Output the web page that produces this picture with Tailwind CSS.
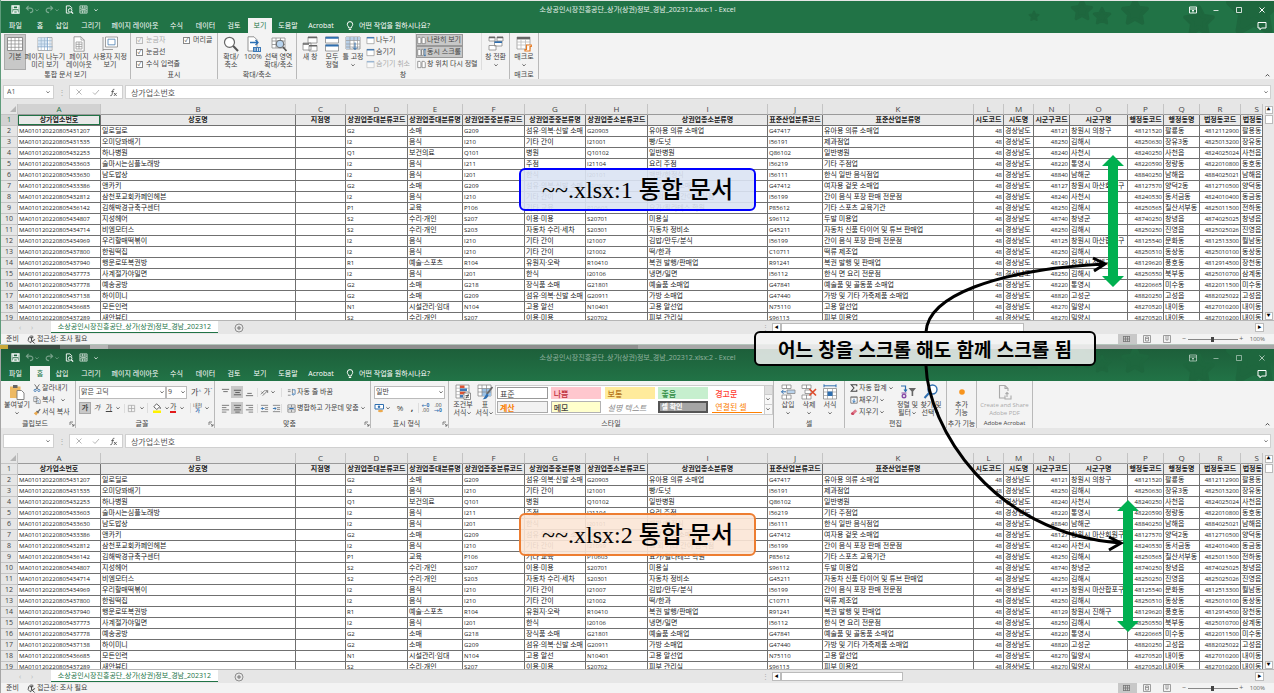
<!DOCTYPE html>
<html lang="ko">
<head>
    <meta charset="UTF-8">
    <meta name="viewport" content="width=device-width, initial-scale=1.0">
    <title>소상공인시장진흥공단_상가(상권)정보_경남_202312.xlsx - Excel</title>
    <script src="https://cdn.jsdelivr.net/npm/@tailwindcss/browser@4"></script>
</head>
<body class="relative overflow-x-hidden bg-[#e6e6e6] font-['Open_Sans','Noto_Sans_CJK_KR',sans-serif] text-[7px] leading-[8px] text-[#444] whitespace-nowrap">

    <!-- icon sprite -->
    <svg class="hidden" xmlns="http://www.w3.org/2000/svg">
        <symbol id="caret" viewBox="0 0 6 6"><path d="M1.4 2.300 3 3.900l1.600-1.600" fill="none" stroke="currentColor" stroke-width=".8"/></symbol>
        <symbol id="save" viewBox="0 0 10 10"><path d="M1 1h8v8H1zM2.5 1v3.2h5V1M3 9V6.5h4V9" fill="none" stroke="currentColor" stroke-width="1.2"/></symbol>
        <symbol id="undo" viewBox="0 0 10 10"><path d="M4 1 1.5 3.5 4 6M1.5 3.5h4.3C10 3.5 9.500 8.500 5.500 8.500" fill="none" stroke="currentColor" stroke-width="1.2"/></symbol>
        <symbol id="redo" viewBox="0 0 10 10"><path d="M6 1l2.500 2.500L6 6M8.500 3.500H4.200C0 3.500.5 8.500 4.500 8.500" fill="none" stroke="currentColor" stroke-width="1.2"/></symbol>
        <symbol id="preview" viewBox="0 0 10 10"><path d="M7.500 4V3L5.500 1H1.500v8H5" fill="none" stroke="currentColor"/><circle cx="5.700" cy="6" r="2" fill="none" stroke="currentColor"/><path d="M7 7.500 9 9.500" stroke="currentColor" stroke-width="1.300"/></symbol>
        <symbol id="cells" viewBox="0 0 10 10"><path d="M1 1h8v8H1zM1 3.500h8M1 6.500h8M4 1v2.500M6.500 1v2.500M4 6.500V9M6.500 6.500V9M2.500 5h5" fill="none" stroke="currentColor" stroke-width=".7"/></symbol>
        <symbol id="ribbonopt" viewBox="0 0 10 10"><path d="M1.500 2h7v6h-7zM1.500 4h7M5 7.500V5M4 6l1-1 1 1" fill="none" stroke="currentColor" stroke-width=".9"/></symbol>
        <symbol id="min" viewBox="0 0 10 10"><path d="M2.500 5.500h5" stroke="currentColor" stroke-width=".8"/></symbol>
        <symbol id="max" viewBox="0 0 10 10"><path d="M2.500 2.500h5v5h-5z" fill="none" stroke="currentColor" stroke-width=".8"/></symbol>
        <symbol id="close" viewBox="0 0 10 10"><path d="m2.500 2.500 5 5m0-5-5 5" stroke="currentColor"/></symbol>
        <symbol id="comment" viewBox="0 0 10 10"><path d="M1 1.500h8v5.500H4.500L3 8.800V7H1z" fill="none" stroke="currentColor"/></symbol>
        <symbol id="bulb" viewBox="0 0 10 10"><path d="M3.800 7C3.800 5.500 2.300 5 2.300 3.300a2.700 2.700 0 0 1 5.400 0C7.700 5 6.200 5.500 6.200 7zM3.800 8.500h2.400" fill="none" stroke="currentColor"/></symbol>
        <symbol id="fx" viewBox="0 0 10 10"><path d="M6 1.500C4 .8 4.200 3 3.800 5S3.500 9 1.500 8.500M2.500 4h3M5.500 5.500l3 3.300M8.500 5.500l-3 3.300" fill="none" stroke="currentColor"/></symbol>
        <symbol id="check" viewBox="0 0 10 10"><path d="m2 5.500 2 2L8 3" fill="none" stroke="currentColor"/></symbol>

        <symbol id="v-normal" viewBox="0 0 16 16"><path d="M.5 1.500h15v13H.5z" fill="#fff" stroke="#777" stroke-width=".8"/><path d="M.5 4.700h15M.5 8h15M.5 11.300h15M4.200 1.500v13M8 1.500v13M11.800 1.500v13" stroke="#8a8a8a" stroke-width=".7"/></symbol>
        <symbol id="v-break" viewBox="0 0 16 16"><path d="M1 1.500h14v13H1z" fill="#fff" stroke="#999" stroke-width=".8"/><path d="M1 1.500h9.500v9H1z" fill="#d5e5f4"/><path d="M1 4.700h14M1 8h14M4.200 1.500v13M7.500 1.500v13M13 1.500v13" stroke="#9db7d0" stroke-width=".7"/><path d="M10.500 1v14M.5 10.800h15" stroke="#7fa5cb" stroke-width=".8"/></symbol>
        <symbol id="v-layout" viewBox="0 0 16 16"><path d="M3 .8h7l3.200 3.200v11.200H3z" fill="#fff" stroke="#888" stroke-width=".8"/><path d="M10 .8V4h3.200M5 6h6v7H5zM5 8.300h6M5 10.600h6M8 6v7" fill="none" stroke="#999" stroke-width=".8"/></symbol>
        <symbol id="v-custom" viewBox="0 0 16 16"><path d="M3.500 1h12v10h-12z" fill="#fff" stroke="#888" stroke-width=".8"/><path d="M6 3.200h7v5.600H6z" fill="#fff" stroke="#4a7db0" stroke-width=".8"/><path d="M1 1v14M1 13.500h10" stroke="#888" stroke-width=".8"/></symbol>
        <symbol id="s-normal" viewBox="0 0 8 8"><path d="M.5 1v6M2.500 1v6M4.500 1v6M6.500 1v6M0 1.500h7M0 4h7M0 6.500h7" stroke="#777" stroke-width=".8"/></symbol>
        <symbol id="s-layout" viewBox="0 0 8 8"><path d="M.5.5h7v7h-7zM2.500 2h3v4h-3zM2.500 3.500h3" fill="none" stroke="#888" stroke-width=".8"/></symbol>
        <symbol id="s-break" viewBox="0 0 8 8"><path d="M.5.5h7v7h-7zM3 .5v4.500h2V.5" fill="none" stroke="#888" stroke-width=".8"/></symbol>
        <symbol id="zoom" viewBox="0 0 16 16"><circle cx="6.500" cy="6.300" r="5" fill="#fff" stroke="#666" stroke-width="1.200"/><path d="m10.200 10 4.800 5" stroke="#555" stroke-width="2"/></symbol>
        <symbol id="zoom100" viewBox="0 0 16 16"><path d="M3 .8h6l3 3V15H3z" fill="#fff" stroke="#888" stroke-width=".9"/><path d="M5 6.500h8M10.500 4l2.500 2.500L10.500 9" fill="none" stroke="#2a6fb5" stroke-width="1.300"/><path d="M8 11h8v5H8z" fill="#3d7ab8"/><path d="M10 12v3M12.500 12v3M14.500 12v3" stroke="#fff" stroke-width=".8"/></symbol>
        <symbol id="zoomsel" viewBox="0 0 16 16"><path d="M1 2h13v10H1zM1 5h13M1 8.500h13M5 2v10M9.500 2v10" fill="#fff" stroke="#8a8a8a" stroke-width=".8"/><circle cx="9" cy="8" r="3.800" fill="#b7d3ee" stroke="#666"/><path d="m12 11 3.500 4" stroke="#555" stroke-width="1.600"/></symbol>
        <symbol id="w-new" viewBox="0 0 16 16"><path d="M6 1h9v6H6zM1 7h8v7H1zM7 9.500h8V15H7z" fill="#fff" stroke="#888" stroke-width=".8"/><path d="M6 1.500h9M1 8h6M7 9.800h8" stroke="#666" stroke-width="1.500"/></symbol>
        <symbol id="w-all" viewBox="0 0 16 16"><path d="M1.500 1h13v6h-13zM1.500 9h13v6h-13z" fill="#fff" stroke="#888" stroke-width=".8"/><path d="M1.500 1.700h13M1.500 9.500h13" stroke="#2f6fb0" stroke-width="2"/></symbol>
        <symbol id="w-freeze" viewBox="0 0 16 16"><path d="M1 1h14v12H1z" fill="#fff" stroke="#888" stroke-width=".8"/><path d="M1 1h14v3.500H1zM1 4.500h4V13H1z" fill="#b9d0e8"/><path d="M1 4.500h14M1 8h14M1 11h14M5 1v12M9 1v12M12.500 1v12" stroke="#999" stroke-width=".7"/><path d="M10 6.500v7M8 11.500l2 2 2-2" stroke="#2f6fb0" fill="none"/></symbol>
        <symbol id="w-small" viewBox="0 0 10 10"><path d="M1 1.500h8v7H1z" fill="#fff" stroke="#999" stroke-width=".8"/><path d="M1 2h8" stroke="#2f6fb0" stroke-width="1.400"/></symbol>
        <symbol id="w-side" viewBox="0 0 10 10"><path d="M.8 1.500h2.500L4.400 3v5.500H.8zM5.600 1.500h2.500L9.200 3v5.500H5.600z" fill="#fff" stroke="#777" stroke-width=".8"/></symbol>
        <symbol id="w-sync" viewBox="0 0 10 10"><path d="M.8 1.500h2.500L4.400 3v5.500H.8zM5 1.500h2V8.500H5z" fill="#fff" stroke="#777" stroke-width=".8"/><path d="M8.800 1v8M8 2.500 8.800 1l.8 1.500M8 7.500 8.800 9l.8-1.500" stroke="#2f6fb0" fill="none" stroke-width=".8"/></symbol>
        <symbol id="w-switch" viewBox="0 0 16 16"><path d="M1 1h6v4H1zM9 1h6v4H9zM1 9.500h7V14H1zM6.500 5.500H14V10H6.500z" fill="#fff" stroke="#888" stroke-width=".8"/><path d="M1 1.500h6M9 1.500h6" stroke="#666" stroke-width="1.400"/><path d="M6.500 6.200H14" stroke="#2f6fb0" stroke-width="1.600"/></symbol>
        <symbol id="macro" viewBox="0 0 16 16"><path d="M1 1h13v12H1z" fill="#fff" stroke="#999" stroke-width=".8"/><path d="M1 2.200h13" stroke="#666" stroke-width="2.400"/><path d="M1 6h13M1 9h13M5 3v10M9.500 3v10" stroke="#bbb" stroke-width=".8"/><path d="M10.500 9h4.800v1.500H14V15H9v-1.500h1.500z" fill="#fff" stroke="#e67b22" stroke-width="1.200"/></symbol>

        <symbol id="paste" viewBox="0 0 16 16"><path d="M1 2.500h10.500V14H1z" fill="#edb963"/><path d="M4 1h4.500v3H4z" fill="#666"/><path d="M8 6.500h4.500L15 9v6.500H8z" fill="#fff" stroke="#777" stroke-width=".9"/></symbol>
        <symbol id="cut" viewBox="0 0 10 10"><path d="m2 .5 4.500 6.300M8 .5 3.500 6.800" stroke="#555"/><circle cx="2.700" cy="8" r="1.400" fill="none" stroke="#2f6fb0"/><circle cx="7.300" cy="8" r="1.400" fill="none" stroke="#2f6fb0"/></symbol>
        <symbol id="copy" viewBox="0 0 10 10"><path d="M1 1h4v6H1zM4 3h3l2 2v4.500H4z" fill="#fff" stroke="#666" stroke-width=".8"/><path d="M5.500 6h2M5.500 7.800h2M2 3h1.500" stroke="#2f6fb0" stroke-width=".7"/></symbol>
        <symbol id="brush" viewBox="0 0 10 10"><path d="M1 6.500 4.500 4l2 2L4 9.500z" fill="#eba94d"/><path d="m4.500 3.500 2.500 3M6.500 4.500 9 1.500" stroke="#666" stroke-width="1.600"/></symbol>
        <symbol id="launch" viewBox="0 0 6 6"><path d="M1 4V1h3M2.500 2.500l2.500 2.500M5 3v2H3" fill="none" stroke="#666" stroke-width=".8"/></symbol>
        <symbol id="border" viewBox="0 0 10 10"><path d="M1.500 1.500h7v7h-7zM5 1.500v7M1.500 5h7" fill="none" stroke="#a5a5a5" stroke-width=".8"/></symbol>
        <symbol id="fill" viewBox="0 0 10 10"><path d="M4.500.8 1.800 3.800l3 2.700 3-2.900zM8.200 4v2" fill="#fff" stroke="#555" stroke-width=".9"/><path d="M1 7.500h8V10H1z" fill="#fff200"/></symbol>
        <symbol id="al-top" viewBox="0 0 10 10"><path d="M1 1.500h8M2.500 4h5" stroke="#666"/></symbol>
        <symbol id="al-mid" viewBox="0 0 10 10"><path d="M1 2.500h8M2.500 5h5M1 7.500h8" stroke="#555"/></symbol>
        <symbol id="al-bot" viewBox="0 0 10 10"><path d="M2.500 6h5M1 8.500h8" stroke="#666"/></symbol>
        <symbol id="al-left" viewBox="0 0 10 10"><path d="M1 1.500h8M1 4h5M1 6.500h8M1 9h5" stroke="#666" stroke-width=".9"/></symbol>
        <symbol id="al-center" viewBox="0 0 10 10"><path d="M1 1.500h8M2.500 4h5M1 6.500h8M2.500 9h5" stroke="#555" stroke-width=".9"/></symbol>
        <symbol id="al-right" viewBox="0 0 10 10"><path d="M1 1.500h8M4 4h5M1 6.500h8M4 9h5" stroke="#666" stroke-width=".9"/></symbol>
        <symbol id="orient" viewBox="0 0 10 10"><path d="M1 7 5.500 2.500M3 8.500 8.500 3M8.500 5.500V3H6M1.500 4l2 2" fill="none" stroke="#666" stroke-width=".9"/></symbol>
        <symbol id="outdent" viewBox="0 0 10 10"><path d="M1 1.500h8M5.500 4H9M5.500 6H9M1 8.500h8" stroke="#777" stroke-width=".9"/><path d="M5 5H1.500M3 3.500 1.500 5 3 6.500" fill="none" stroke="#2f6fb0"/></symbol>
        <symbol id="indent" viewBox="0 0 10 10"><path d="M1 1.500h8M5.500 4H9M5.500 6H9M1 8.500h8" stroke="#777" stroke-width=".9"/><path d="M1 5h3.500M3 3.500 4.500 5 3 6.500" fill="none" stroke="#2f6fb0"/></symbol>
        <symbol id="wrap" viewBox="0 0 10 10"><path d="M1 2h3M1 4h3M1 8h3M6 1v5" stroke="#777" stroke-width=".9"/><path d="M6 2h3v5H6M7.200 5.500 5.800 7l1.400 1.500" fill="none" stroke="#2f6fb0" stroke-width=".8"/></symbol>
        <symbol id="merge" viewBox="0 0 10 10"><path d="M1 1h8v8H1zM1 3.500h8M1 6.500h8M5 1v2.500M5 6.500V9" fill="#fff" stroke="#777" stroke-width=".8"/><path d="M2.500 5h5" stroke="#2f6fb0" stroke-width="1.300"/></symbol>
        <symbol id="money" viewBox="0 0 10 10"><path d="M1 1.500h8.500v4.500H1z" fill="#fff" stroke="#2f6fb0"/><circle cx="5" cy="3.700" r="1.200" fill="#2f6fb0"/><ellipse cx="6.500" cy="8" rx="2.500" ry="1.200" fill="#eba94d"/></symbol>
        <symbol id="cond" viewBox="0 0 16 16"><path d="M1 1h13v13H1z" fill="#fff" stroke="#888" stroke-width=".8"/><path d="M5 1v13M1 4.200h13M1 7.500h13M1 10.700h13" stroke="#aaa" stroke-width=".7"/><path d="M5 1.500h4.500v2.500H5zM5 7.800h5.500v2.500H5z" fill="#dd5233"/><path d="M5 4.500h7v2.500H5zM5 11h3v2.500H5z" fill="#3f79b7"/><path d="M9 9h6.500v6.500H9z" fill="#fff" stroke="#777" stroke-width=".8"/><path d="M10.500 11.500h3.500M10.500 13.200h3.500M13.500 10l-2.500 4.500" stroke="#444" stroke-width=".8"/></symbol>
        <symbol id="tblfmt" viewBox="0 0 16 16"><path d="M1 1h13v11H1z" fill="#fff" stroke="#888" stroke-width=".8"/><path d="M5 4.500h9V12H5z" fill="#9cc2e6"/><path d="M1 4.500h13M1 8h13M5 1v11M9.500 1v11" stroke="#888" stroke-width=".7"/><path d="M15.500 3 10 10" stroke="#666" stroke-width="1.800"/><path d="m10 9.500 1.500 1.500c-.5 3-3 4.500-6 4.200 2-1 2.500-4 4.500-5.700z" fill="#2f6fb0"/></symbol>
        <symbol id="c-ins" viewBox="0 0 16 16"><path d="M2 1h9v3.500H2zM6.500 1v3.500M2 11h9v4H2zM6.500 11v4" fill="#fff" stroke="#888" stroke-width=".8"/><path d="M7 6h8v3.500H7z" fill="#b9d3ec" stroke="#888" stroke-width=".8"/><path d="M6 7.800H1.500M3.500 5.800l-2 2 2 2" fill="none" stroke="#2f6fb0"/></symbol>
        <symbol id="c-del" viewBox="0 0 16 16"><path d="M1 1h9v3.500H1zM5.500 1v3.500M1 11h9v4H1zM5.500 11v4M4 6h6v3.500H4z" fill="#fff" stroke="#888" stroke-width=".8"/><path d="m8.500 5 6.500 6.500m0-6.500-6.500 6.500" stroke="#dd4b2b" stroke-width="1.600"/></symbol>
        <symbol id="c-fmt" viewBox="0 0 16 16"><path d="M1.500 4.500h13V15h-13z" fill="#fff" stroke="#888" stroke-width=".8"/><path d="M1.500 8h13M1.500 11.500h13M5.500 4.500V15M10.500 4.500V15" stroke="#999" stroke-width=".7"/><path d="M5.500 7.500h5v4.500h-5z" fill="#2f6fb0"/><path d="M2 1.800h12M2 .3v3M14 .3v3" stroke="#2f6fb0"/></symbol>
        <symbol id="sum" viewBox="0 0 10 10"><path d="M8.500 2.800V1h-7L5 5 1.500 9h7V7.200" fill="none" stroke="#444" stroke-width="1.300"/></symbol>
        <symbol id="filldown" viewBox="0 0 10 10"><path d="M1 1h8v8H1z" fill="#fff" stroke="#666"/><path d="M1 2h8" stroke="#777"/><path d="M5 3.500V8M3 6l2 2 2-2" fill="none" stroke="#2f6fb0" stroke-width="1.200"/></symbol>
        <symbol id="erase" viewBox="0 0 10 10"><path d="m1 7 5.500-5.500L9 4 4 8.800H2.500z" fill="#e07a8c"/><path d="m1 7 2-2 2.500 2.500L4 8.800H2.500z" fill="#c84860"/></symbol>
        <symbol id="sort" viewBox="0 0 16 16"><path d="M1 2h4.500v5M4 5.500l1.500 2L7 5.500" fill="none" stroke="#2f6fb0" stroke-width="1.200"/><path d="M8.500 4H16l-2.800 3.500V12h-1.600V7.500z" fill="#666"/><circle cx="4" cy="12" r="1.800" fill="none" stroke="#8a4da8" stroke-width="1.400"/><path d="M1.500 9h5" stroke="#8a4da8"/></symbol>
        <symbol id="find" viewBox="0 0 16 16"><circle cx="9.500" cy="5.500" r="4.500" fill="#fff" stroke="#2f6fb0" stroke-width="1.400"/><path d="M6 9 1.500 14" stroke="#2f6fb0" stroke-width="2"/></symbol>
        <symbol id="addin" viewBox="0 0 16 16"><circle cx="8" cy="8" r="2.800" fill="#f7941d"/></symbol>
        <symbol id="pdf" viewBox="0 0 16 16"><path d="M8 14H2.500V1.500H8l3 3V7M8 1.500v3h3M10 13V8.500M8.500 10 10 8.500l1.500 1.500M8 11.500v3.500h6v-3.500" fill="none" stroke="#aaa" stroke-width="1.100"/></symbol>
        <symbol id="access" viewBox="0 0 10 10"><path d="M7 1.500A3.800 3.800 0 1 0 3.500 8.500" fill="none" stroke="#444"/><path d="M3 3h4M5 3v3l3.500 3.500M5 6 4 9M6 6.500l3-1.500" fill="none" stroke="#333"/></symbol>
        <symbol id="plus-c" viewBox="0 0 10 10"><circle cx="5" cy="5" r="4" fill="none" stroke="#777" stroke-width=".8"/><path d="M5 3v4M3 5h4" stroke="#777"/></symbol>
        <symbol id="star" viewBox="-10 -10 20 20"><path d="m0-8 2.500 5 5.500.8-4 3.900.9 5.500L0 4.600l-4.900 2.600.9-5.500-4-3.900 5.500-.8z" stroke-width="2.500" stroke-linejoin="round"/></symbol>
    </svg>

    <!-- window 1 : view tab -->
    <main class="border-l border-[#5f9c7b] pt-px" aria-label="창 1">
        <header data-titlebar="1"></header>
        <div class="flex h-[46px] bg-[#f3f3f3]">
            <section class="flex w-[130px] shrink-0 flex-col border-r border-[#b9b9b9]">
                <div class="flex flex-1 pt-px pl-[3px]">
                    <button class="flex w-[22px] flex-col items-center gap-px border border-[#aaa] bg-[#c8c8c8] pt-px"><svg class="size-4"><use href="#v-normal"/></svg>기본</button>
                    <button class="flex w-[38px] flex-col items-center gap-px pt-[2px]"><svg class="size-4"><use href="#v-break"/></svg><span>페이지 나누기<br>미리 보기</span></button>
                    <button class="flex w-[30px] flex-col items-center gap-px pt-[2px]"><svg class="size-4"><use href="#v-layout"/></svg><span>페이지<br>레이아웃</span></button>
                    <button class="flex w-[32px] flex-col items-center gap-px pt-[2px]"><svg class="size-4"><use href="#v-custom"/></svg><span>사용자 지정<br>보기</span></button>
                </div>
                <h2 class="text-center leading-[9px]">통합 문서 보기</h2>
            </section>
            <section class="flex w-[87px] shrink-0 flex-col border-r border-[#b9b9b9]">
                <div class="grid flex-1 auto-rows-[12px] grid-cols-[47px_auto] content-start pt-px pl-[5px]">
                    <label class="flex items-center gap-[3px] text-[#aaa]"><input type="checkbox" checked disabled class="flex size-[7px] appearance-none items-center justify-center border border-[#bbb] after:text-[6px] after:leading-[6px] after:text-[#999] after:content-['✓']">눈금자</label>
                    <label class="flex items-center gap-[3px]"><input type="checkbox" checked class="flex size-[7px] appearance-none items-center justify-center border border-[#888] bg-white after:text-[6px] after:leading-[6px] after:content-['✓']">머리글</label>
                    <label class="col-span-2 flex items-center gap-[3px]"><input type="checkbox" checked class="flex size-[7px] appearance-none items-center justify-center border border-[#888] bg-white after:text-[6px] after:leading-[6px] after:content-['✓']">눈금선</label>
                    <label class="col-span-2 flex items-center gap-[3px]"><input type="checkbox" checked class="flex size-[7px] appearance-none items-center justify-center border border-[#888] bg-white after:text-[6px] after:leading-[6px] after:content-['✓']">수식 입력줄</label>
                </div>
                <h2 class="text-center leading-[9px]">표시</h2>
            </section>
            <section class="flex w-[79px] shrink-0 flex-col border-r border-[#b9b9b9]">
                <div class="flex flex-1 pt-[3px] pl-px">
                    <button class="flex w-[24px] flex-col items-center gap-px"><svg class="size-4"><use href="#zoom"/></svg><span>확대/<br>축소</span></button>
                    <button class="flex w-[20px] flex-col items-center gap-px"><svg class="size-4"><use href="#zoom100"/></svg>100%</button>
                    <button class="flex w-[31px] flex-col items-center gap-px"><svg class="size-4"><use href="#zoomsel"/></svg><span>선택 영역<br>확대/축소</span></button>
                </div>
                <h2 class="text-center leading-[9px]">확대/축소</h2>
            </section>
            <section class="flex w-[213px] shrink-0 flex-col border-r border-[#b9b9b9]">
                <div class="flex flex-1">
                    <button class="flex w-[26px] flex-col items-center gap-px pt-[3px]"><svg class="size-4"><use href="#w-new"/></svg>새 창</button>
                    <button class="flex w-[18px] flex-col items-center gap-px pt-[3px]"><svg class="size-4"><use href="#w-all"/></svg><span>모두<br>정렬</span></button>
                    <button class="flex w-[24px] flex-col items-center gap-px pt-[3px]"><svg class="size-4"><use href="#w-freeze"/></svg>틀 고정<svg class="size-[6px]"><use href="#caret"/></svg></button>
                    <div class="flex w-[50px] flex-col pt-px pl-px">
                        <button class="flex h-3 items-center gap-px"><svg class="size-[9px]"><use href="#w-small"/></svg>나누기</button>
                        <button class="flex h-3 items-center gap-px"><svg class="size-[9px]"><use href="#w-small"/></svg>숨기기</button>
                        <button class="flex h-3 items-center gap-px text-[#aaa]"><svg class="size-[9px] opacity-50"><use href="#w-small"/></svg>숨기기 취소</button>
                    </div>
                    <div class="flex w-[66px] flex-col items-start border-l border-[#ddd] pt-px">
                        <button class="flex h-3 w-[47px] items-center gap-px border border-[#999] bg-[#c8c8c8]"><svg class="size-[9px]"><use href="#w-side"/></svg>나란히 보기</button>
                        <button class="flex h-3 w-[47px] items-center gap-px border border-[#999] bg-[#c8c8c8]"><svg class="size-[9px]"><use href="#w-sync"/></svg>동시 스크롤</button>
                        <button class="flex h-3 items-center gap-px pl-px"><svg class="size-[9px]"><use href="#w-side"/></svg>창 위치 다시 정렬</button>
                    </div>
                    <button class="flex w-[28px] flex-col items-center gap-px border-l border-[#ddd] pt-[3px]"><svg class="size-4"><use href="#w-switch"/></svg>창 전환<svg class="size-[6px]"><use href="#caret"/></svg></button>
                </div>
                <h2 class="text-center leading-[9px]">창</h2>
            </section>
            <section class="flex w-[29px] shrink-0 flex-col border-r border-[#b9b9b9]">
                <button class="flex flex-1 flex-col items-center gap-px pt-[3px]"><svg class="size-4"><use href="#macro"/></svg>매크로<svg class="size-[6px]"><use href="#caret"/></svg></button>
                <h2 class="text-center leading-[9px]">매크로</h2>
            </section>
            <button class="mt-auto ml-auto mr-[3px] rotate-180" aria-label="리본 접기"><svg class="size-[7px]"><use href="#caret"/></svg></button>
        </div>
        <div data-formula="1"></div>
        <div data-sheet="1"></div>
        <footer data-footer="1"></footer>
    </main>

    <!-- desktop showing between the windows -->
    <div class="flex h-[5px] border-t border-[#b5c5bc] bg-[#8f8f8f]">
        <div class="w-2 bg-[#c9a93c]"></div><div class="w-[52px] bg-[#3c4a43]"></div><div class="w-[30px] bg-[#6f7672]"></div><div class="w-[18px] bg-[#b5b5b5]"></div><div class="w-[530px]"></div><div class="flex-1 bg-[#a8a8a8]"></div>
    </div>

    <!-- window 2 : home tab -->
    <main class="border-l border-[#a5a5a5]" aria-label="창 2">
        <header data-titlebar="2"></header>
        <div class="flex h-[47px] bg-[#f3f3f3]">
            <section class="flex w-[75px] shrink-0 flex-col border-r border-[#b9b9b9]">
                <div class="flex flex-1">
                    <button class="flex w-8 flex-col items-center gap-px pt-[3px]"><svg class="size-4"><use href="#paste"/></svg>붙여넣기<svg class="size-[6px]"><use href="#caret"/></svg></button>
                    <div class="flex flex-col pt-px">
                        <button class="flex h-3 items-center gap-px"><svg class="size-2"><use href="#cut"/></svg>잘라내기</button>
                        <button class="flex h-3 items-center gap-px"><svg class="size-2"><use href="#copy"/></svg>복사<svg class="ml-1 size-[6px]"><use href="#caret"/></svg></button>
                        <button class="flex h-3 items-center gap-px"><svg class="size-2"><use href="#brush"/></svg>서식 복사</button>
                    </div>
                </div>
                <div class="flex items-center"><h2 class="flex-1 text-center leading-[9px]">클립보드</h2><svg class="size-[6px]"><use href="#launch"/></svg></div>
            </section>
            <section class="flex w-[139px] shrink-0 flex-col border-r border-[#b9b9b9]">
                <div class="flex flex-1 flex-col gap-[2px] pt-1 pl-[3px]">
                    <div class="flex h-[14px] items-center">
                        <div class="grid items-center"><select aria-label="글꼴" class="col-start-1 row-start-1 h-[13px] w-[87px] appearance-none border border-[#bbb] bg-white pl-px"><option>맑은 고딕</option></select><svg class="col-start-1 row-start-1 mr-px size-[6px] justify-self-end"><use href="#caret"/></svg></div>
                        <div class="grid items-center"><select aria-label="글꼴 크기" class="col-start-1 row-start-1 h-[13px] w-[21px] appearance-none border border-[#bbb] bg-white pl-px"><option>9</option></select><svg class="col-start-1 row-start-1 mr-px size-[6px] justify-self-end"><use href="#caret"/></svg></div>
                        <button class="ml-[3px] w-3 text-[8px]">가<sup class="text-[5px] text-[#2f6fb0]">^</sup></button>
                        <button class="w-3">가<sup class="text-[5px] text-[#2f6fb0]">ˇ</sup></button>
                    </div>
                    <div class="flex h-[14px] items-center">
                        <button class="h-3 w-3 border border-[#aaa] bg-[#c8c8c8] font-bold">가</button>
                        <button class="w-3 italic">가</button>
                        <button class="w-3 underline">가</button>
                        <svg class="mr-[3px] size-[6px]"><use href="#caret"/></svg>
                        <button class="flex w-[23px] items-center gap-[3px] border-l border-[#ddd] pl-[2px]" aria-label="테두리"><svg class="size-[9px]"><use href="#border"/></svg><svg class="size-[6px]"><use href="#caret"/></svg></button>
                        <button class="flex w-[23px] items-center gap-[2px] border-l border-[#ddd] pl-1" aria-label="채우기 색"><svg class="size-[10px]"><use href="#fill"/></svg><svg class="size-[6px]"><use href="#caret"/></svg></button>
                        <button class="flex w-[20px] items-center gap-[3px]"><span class="border-b-2 border-[#e21b1b] leading-[8px]">가</span><svg class="size-[6px]"><use href="#caret"/></svg></button>
                        <button class="flex items-center gap-[2px] border-l border-[#ddd] pl-[2px] text-[5px] leading-[5px]"><span>내천<br><b class="text-[#2f6fb0]">가</b></span><svg class="size-[6px]"><use href="#caret"/></svg></button>
                    </div>
                </div>
                <div class="flex items-center"><h2 class="flex-1 text-center leading-[9px]">글꼴</h2><svg class="size-[6px]"><use href="#launch"/></svg></div>
            </section>
            <section class="flex w-[156px] shrink-0 flex-col border-r border-[#b9b9b9]">
                <div class="flex flex-1 flex-col gap-[2px] pt-1 pl-1">
                    <div class="flex h-[14px] items-center">
                        <button class="flex h-3 w-3 items-center justify-center" aria-label="위쪽 맞춤"><svg class="size-[9px]"><use href="#al-top"/></svg></button>
                        <button class="flex h-3 w-3 items-center justify-center bg-[#c8c8c8]" aria-label="가운데 맞춤"><svg class="size-[9px]"><use href="#al-mid"/></svg></button>
                        <button class="flex h-3 w-3 items-center justify-center" aria-label="아래쪽 맞춤"><svg class="size-[9px]"><use href="#al-bot"/></svg></button>
                        <button class="ml-[2px] flex w-[24px] items-center gap-px border-l border-[#ddd] pl-[2px]" aria-label="방향"><svg class="size-[9px]"><use href="#orient"/></svg><svg class="size-[6px]"><use href="#caret"/></svg></button>
                        <button class="flex items-center gap-px border-l border-[#ddd] pl-[5px]"><svg class="size-[9px]"><use href="#wrap"/></svg>자동 줄 바꿈</button>
                    </div>
                    <div class="flex h-[14px] items-center">
                        <button class="flex h-3 w-3 items-center justify-center" aria-label="왼쪽 맞춤"><svg class="size-[9px]"><use href="#al-left"/></svg></button>
                        <button class="flex h-3 w-3 items-center justify-center bg-[#c8c8c8]" aria-label="가운데"><svg class="size-[9px]"><use href="#al-center"/></svg></button>
                        <button class="flex h-3 w-3 items-center justify-center" aria-label="오른쪽 맞춤"><svg class="size-[9px]"><use href="#al-right"/></svg></button>
                        <span class="ml-[2px] flex w-[24px] items-center gap-[3px] border-l border-[#ddd] pl-[2px]"><button aria-label="내어쓰기"><svg class="size-[9px]"><use href="#outdent"/></svg></button><button aria-label="들여쓰기"><svg class="size-[9px]"><use href="#indent"/></svg></button></span>
                        <button class="flex items-center gap-px border-l border-[#ddd] pl-[5px]"><svg class="size-[9px]"><use href="#merge"/></svg>병합하고 가운데 맞춤<svg class="size-[6px]"><use href="#caret"/></svg></button>
                    </div>
                </div>
                <div class="flex items-center"><h2 class="flex-1 text-center leading-[9px]">맞춤</h2><svg class="size-[6px]"><use href="#launch"/></svg></div>
            </section>
            <section class="flex w-[78px] shrink-0 flex-col border-r border-[#b9b9b9]">
                <div class="flex flex-1 flex-col gap-[2px] pt-1 pl-[3px]">
                    <div class="grid h-[14px] w-[71px] items-center"><select aria-label="표시 형식" class="col-start-1 row-start-1 h-[13px] w-full appearance-none border border-[#bbb] bg-white pl-px"><option>일반</option></select><svg class="col-start-1 row-start-1 mr-px size-[6px] justify-self-end"><use href="#caret"/></svg></div>
                    <div class="flex h-[14px] items-center">
                        <button class="flex w-5 items-center gap-px" aria-label="회계 형식"><svg class="size-[10px]"><use href="#money"/></svg><svg class="size-[6px]"><use href="#caret"/></svg></button>
                        <button class="w-3 text-[8px]">%</button>
                        <button class="w-3 text-[9px] font-bold">,</button>
                        <button class="w-[14px] border-l border-[#ddd] text-[5px] leading-[5px]"><b class="text-[#2f6fb0]">←0</b><br>.00</button>
                        <button class="w-3 text-[5px] leading-[5px]">.00<br><b class="text-[#2f6fb0]">→0</b></button>
                    </div>
                </div>
                <div class="flex items-center"><h2 class="flex-1 text-center leading-[9px]">표시 형식</h2><svg class="size-[6px]"><use href="#launch"/></svg></div>
            </section>
            <section class="flex w-[325px] shrink-0 flex-col border-r border-[#b9b9b9]">
                <div class="flex flex-1">
                    <button class="flex w-[27px] flex-col items-center gap-px pt-[3px] pl-px"><svg class="size-4"><use href="#cond"/></svg><span>조건부<br>서식<svg class="inline size-[6px]"><use href="#caret"/></svg></span></button>
                    <button class="flex w-[18px] flex-col items-center gap-px pt-[3px]"><svg class="size-4"><use href="#tblfmt"/></svg><span>표<br>서식<svg class="inline size-[6px]"><use href="#caret"/></svg></span></button>
                    <div class="mt-1 ml-px flex h-[30px] border border-[#ccc] bg-white">
                        <div class="grid grid-cols-5 grid-rows-2 gap-x-[3px] gap-y-[2px] p-px text-[8px] leading-[9px]">
                            <button class="w-[51px] border border-[#999] pl-[2px] text-left">표준</button>
                            <button class="w-[50px] bg-[#ffc7ce] pl-[3px] text-left font-medium text-[#c0303c]">나쁨</button>
                            <button class="w-[50px] bg-[#ffeb9c] pl-[3px] text-left font-medium text-[#b5761a]">보통</button>
                            <button class="w-[50px] bg-[#c6efce] pl-[3px] text-left font-medium text-[#2d8a3e]">좋음</button>
                            <button class="w-[50px] pl-[3px] text-left font-medium text-[#ff3b30]">경고문</button>
                            <button class="w-[51px] border border-[#aaa] bg-[#f2f2f2] pl-[2px] text-left font-bold text-[#fa7d00]">계산</button>
                            <button class="w-[50px] border border-[#b2b2b2] bg-[#ffffcc] pl-[2px] text-left font-medium">메모</button>
                            <button class="w-[50px] pl-[3px] text-left text-[#8a8a8a] italic">설명 텍스트</button>
                            <button class="w-[50px] border-2 border-[#555] bg-[#a5a5a5] pl-px text-left text-[7px] leading-[8px] font-bold text-white">셀 확인</button>
                            <button class="w-[50px] border-b border-[#ff8001] pl-[3px] text-left text-[#fa7d00]">연결된 셀</button>
                        </div>
                        <div class="grid w-2 grid-rows-3 divide-y divide-[#ccc] border-l border-[#ccc] bg-[#f7f7f7]">
                            <button class="bg-[#e0e0e0]" aria-label="위로"></button>
                            <button class="flex items-center" aria-label="아래로"><svg class="size-[6px]"><use href="#caret"/></svg></button>
                            <button class="flex items-center" aria-label="자세히"><svg class="size-[6px]"><use href="#caret"/></svg></button>
                        </div>
                    </div>
                </div>
                <h2 class="text-center leading-[9px]">스타일</h2>
            </section>
            <section class="flex w-[71px] shrink-0 flex-col border-r border-[#b9b9b9]">
                <div class="flex flex-1 justify-center gap-[5px] pt-[3px]">
                    <button class="flex flex-col items-center gap-px"><svg class="size-4"><use href="#c-ins"/></svg>삽입<svg class="size-[6px]"><use href="#caret"/></svg></button>
                    <button class="flex flex-col items-center gap-px"><svg class="size-4"><use href="#c-del"/></svg>삭제<svg class="size-[6px]"><use href="#caret"/></svg></button>
                    <button class="flex flex-col items-center gap-px"><svg class="size-4"><use href="#c-fmt"/></svg>서식<svg class="size-[6px]"><use href="#caret"/></svg></button>
                </div>
                <h2 class="text-center leading-[9px]">셀</h2>
            </section>
            <section class="flex w-[102px] shrink-0 flex-col border-r border-[#b9b9b9]">
                <div class="flex flex-1">
                    <div class="flex w-[50px] flex-col pt-px pl-[5px]">
                        <button class="flex h-3 items-center gap-px"><svg class="size-2"><use href="#sum"/></svg>자동 합계<svg class="size-[6px] shrink-0"><use href="#caret"/></svg></button>
                        <button class="flex h-3 items-center gap-px"><svg class="size-2"><use href="#filldown"/></svg>채우기<svg class="size-[6px]"><use href="#caret"/></svg></button>
                        <button class="flex h-3 items-center gap-px"><svg class="size-2"><use href="#erase"/></svg>지우기<svg class="size-[6px]"><use href="#caret"/></svg></button>
                    </div>
                    <button class="flex w-[25px] flex-col items-center gap-px pt-[3px]"><svg class="size-4"><use href="#sort"/></svg><span>정렬 및<br>필터<svg class="inline size-[6px]"><use href="#caret"/></svg></span></button>
                    <button class="flex w-[22px] flex-col items-center gap-px pt-[3px]"><svg class="size-4"><use href="#find"/></svg><span>찾기 및<br>선택<svg class="inline size-[6px]"><use href="#caret"/></svg></span></button>
                </div>
                <h2 class="text-center leading-[9px]">편집</h2>
            </section>
            <section class="flex w-[30px] shrink-0 flex-col border-r border-[#b9b9b9]">
                <button class="flex flex-1 flex-col items-center gap-px pt-[3px]"><svg class="size-4"><use href="#addin"/></svg><span>추가<br>기능</span></button>
                <h2 class="self-center leading-[9px]">추가 기능</h2>
            </section>
            <section class="flex w-[56px] shrink-0 flex-col border-r border-[#b9b9b9]">
                <button disabled class="flex flex-1 flex-col items-center gap-px pt-[3px] text-[6px] text-[#aaa]"><svg class="size-4"><use href="#pdf"/></svg><span>Create and Share<br>Adobe PDF</span></button>
                <h2 class="text-center text-[6px] leading-[9px]">Adobe Acrobat</h2>
            </section>
            <button class="mt-auto ml-auto mr-[3px] rotate-180" aria-label="리본 접기"><svg class="size-[7px]"><use href="#caret"/></svg></button>
        </div>
        <div data-formula="2"></div>
        <div data-sheet="2"></div>
        <footer data-footer="2"></footer>
    </main>

    <!-- annotations drawn over both windows -->
    <svg class="pointer-events-none absolute top-0 left-0 h-[693px] w-[1274px]" viewBox="0 0 1274 693" fill="none">
        <path d="M1113 155l11 11h-6v110h6l-11 11-11-11h6V166h-6z" fill="#00b050"/>
        <path d="M1128 500l11 11h-6v110h6l-11 11-11-11h6V511h-6z" fill="#00b050"/>
        <path d="M926 332C928 296 995 270 1104 264M1093 258l12 6-11 7" stroke="#000" stroke-width="3"/>
        <path d="M926 366C928 425 990 533 1120 543M1109 537l12 6-12 7" stroke="#000" stroke-width="3"/>
    </svg>
    <p class="absolute top-[168px] left-[519px] flex h-[43px] w-[237px] items-center justify-center rounded-md border-2 border-[#0000ff] bg-[#dae3f3]/90 font-['Liberation_Serif','Noto_Sans_CJK_KR',serif] text-[24px] leading-[30px] font-medium text-black">~~.xlsx:1 통합 문서</p>
    <p class="absolute top-[513px] left-[519px] flex h-[43px] w-[237px] items-center justify-center rounded-md border-2 border-[#ed7d31] bg-[#fbe5d6]/90 font-['Liberation_Serif','Noto_Sans_CJK_KR',serif] text-[24px] leading-[30px] font-medium text-black">~~.xlsx:2 통합 문서</p>
    <p class="absolute top-[331px] left-[754px] flex h-[35px] w-[342px] items-center justify-center rounded-md border-2 border-black bg-[#f2f2f2]/85 font-['Noto_Sans_CJK_KR',sans-serif] text-[19px] leading-[30px] font-bold text-black">어느 창을 스크롤 해도 함께 스크롤 됨</p>

    <script>
        const fileName = "소상공인시장진흥공단_상가(상권)정보_경남_202312";

        const tabs = [
            ["파일", "w-[29px]"], ["홈", "w-5"], ["삽입", "w-6"], ["그리기", "w-[34px]"], ["페이지 레이아웃", "w-[54px]"],
            ["수식", "w-[29px]"], ["데이터", "w-[29px]"], ["검토", "w-7"], ["보기", "w-6"], ["도움말", "w-8"], ["Acrobat", "w-[34px]"]
        ];

        // letter, heading, column width (the last column takes what is left)
        const cols = [
            ["A", "상가업소번호", "w-[83px]"], ["B", "상호명", "w-[195px]"], ["C", "지점명", "w-[50px]"],
            ["D", "상권업종대분류코드", "w-[62px]"], ["E", "상권업종대분류명", "w-[55px]"], ["F", "상권업종중분류코드", "w-[62px]"],
            ["G", "상권업종중분류명", "w-[61px]"], ["H", "상권업종소분류코드", "w-[62px]"], ["I", "상권업종소분류명", "w-[120px]"],
            ["J", "표준산업분류코드", "w-[55px]"], ["K", "표준산업분류명", "w-[151px]"], ["L", "시도코드", "w-[30px]"],
            ["M", "시도명", "w-[30px]"], ["N", "시군구코드", "w-[36px]"], ["O", "시군구명", "w-[58px]"],
            ["P", "행정동코드", "w-[36px]"], ["Q", "행정동명", "w-[36px]"], ["R", "법정동코드", "w-[41px]"], ["S", "법정동", ""]
        ];

        const rows = `431207|일로딜로|G2|소매|G209|섬유·의복·신발 소매|G20903|유아용 의류 소매업|G47417|유아용 의류 소매업|48121|창원시 의창구|48121520|팔룡동|4812112900|팔용동
431535|오미당꽈배기|I2|음식|I210|기타 간이|I21001|빵/도넛|I56191|제과점업|48250|김해시|48250630|장유3동|4825013200|장유동
432253|하나병원|Q1|보건의료|Q101|병원|Q10102|일반병원|Q86102|일반병원|48240|사천시|48240250|사천읍|4824025024|사천읍
433603|술마시는심플노래방|I2|음식|I211|주점|I21104|요리 주점|I56219|기타 주점업|48220|통영시|48220590|정량동|4822010800|동호동
433630|남도밥상|I2|음식|I201|한식|I20101|백반/한정식|I56111|한식 일반 음식점업|48840|남해군|48840250|남해읍|4884025021|남해읍
433386|앤카키|G2|소매|G209|섬유·의복·신발 소매|G20902|여성 의류 소매업|G47412|여자용 겉옷 소매업|48127|창원시 마산회원구|48127570|양덕2동|4812710500|양덕동
432812|삼천포교회카페인헤븐|I2|음식|I210|기타 간이|I21099|그 외 기타 간이 음식점|I56199|간이 음식 포장 판매 전문점|48240|사천시|48240530|동서금동|4824010400|동금동
436142|김해박경규축구센터|P1|교육|P106|기타 교육|P10603|요가/필라테스 학원|P85612|기타 스포츠 교육기관|48250|김해시|48250565|칠산서부동|4825011500|전하동
434807|지성헤어|S2|수리·개인|S207|이용·미용|S20701|미용실|S96112|두발 미용업|48740|창녕군|48740250|창녕읍|4874025025|창녕읍
434714|비엠모터스|S2|수리·개인|S203|자동차 수리·세차|S20301|자동차 정비소|G45211|자동차 신품 타이어 및 튜브 판매업|48250|김해시|48250250|진영읍|4825025026|진영읍
434969|우리할매떡볶이|I2|음식|I210|기타 간이|I21007|김밥/만두/분식|I56199|간이 음식 포장 판매 전문점|48125|창원시 마산합포구|48125540|문화동|4812513300|월남동5
437800|한림떡집|I2|음식|I210|기타 간이|I21002|떡/한과|C10711|떡류 제조업|48250|김해시|48250510|동상동|4825010100|동상동
437940|행운로또복권방|R1|예술·스포츠|R104|유원지·오락|R10410|복권 발행/판매업|R91241|복권 발행 및 판매업|48129|창원시 진해구|48129620|풍호동|4812914500|장천동
437773|사계절가야밀면|I2|음식|I201|한식|I20106|냉면/밀면|I56112|한식 면 요리 전문점|48250|김해시|48250550|북부동|4825010700|삼계동
437778|예송공방|G2|소매|G218|장식품 소매|G21801|예술품 소매업|G47841|예술품 및 골동품 소매업|48220|통영시|48220665|미수동|4822011500|미수동
437138|하이미니|G2|소매|G209|섬유·의복·신발 소매|G20911|가방 소매업|G47440|가방 및 기타 가죽제품 소매업|48820|고성군|48820250|고성읍|4882025022|고성읍
436685|모든인력|N1|시설관리·임대|N104|고용 알선|N10401|고용 알선업|N75110|고용 알선업|48270|밀양시|48270520|내이동|4827010200|내이동
437289|새안뷰티|S2|수리·개인|S207|이용·미용|S20702|피부 관리실|S96113|피부 미용업|48270|밀양시|48270520|내이동|4827010200|내이동`
            .split("\n").map(line => {
                const v = line.split("|");
                return ["MA010120220805" + v[0], v[1], "", ...v.slice(2, 10), "48", "경상남도", ...v.slice(10)];
            });

        const icon = (id, cls) => `<svg class="${cls}"><use href="#${id}"/></svg>`;

        function titlebar(n) {
            const first = n === 1;
            const active = first ? "보기" : "홈";
            return `<div class="relative overflow-hidden text-white ${first ? "bg-[#217346]" : "bg-linear-to-b from-[#1d5f3a] to-[#217346]"}">
                <svg class="absolute top-0 right-0 h-8 w-[260px]" viewBox="0 0 260 32" fill="#1e673e" stroke="#1e673e">
                    <use href="#star" x="14" y="9" width="12" height="12"/>
                    <use href="#star" x="56" y="-3" width="24" height="24"/>
                    <use href="#star" x="78" y="5" width="20" height="20"/>
                    <use href="#star" x="106" y="-4" width="30" height="30"/>
                    <use href="#star" x="168" y="3" width="34" height="34" fill="none"/>
                    <use href="#star" x="171" y="6" width="27" height="27"/>
                    <use href="#star" x="210" y="-22" width="60" height="60" fill="none"/>
                    <use href="#star" x="217" y="-15" width="46" height="46"/>
                </svg>
                <div class="relative grid h-[17px] grid-cols-[1fr_auto_1fr] items-center">
                    <div class="flex items-center pl-[10px]">
                        <button class="mr-[5px]" aria-label="저장">${icon("save", "size-[9px]")}</button>
                        <button class="mr-[5px] flex items-center text-white/40" aria-label="실행 취소">${icon("undo", "size-[9px]")}${icon("caret", "size-[6px]")}</button>
                        <button class="mr-[5px] flex items-center text-white/40" aria-label="다시 실행">${icon("redo", "size-[9px]")}${icon("caret", "size-[6px]")}</button>
                        <button class="mr-[5px]" aria-label="인쇄 미리 보기">${icon("preview", "size-[9px]")}</button>
                        <button class="mr-[5px]" aria-label="표">${icon("cells", "size-[9px]")}</button>
                        <button aria-label="사용자 지정">${icon("caret", "size-[6px]")}</button>
                    </div>
                    <h1 class="${first ? "text-white/90" : "text-white/50"}">${fileName}.xlsx:${n} - Excel</h1>
                    <div class="flex justify-end gap-[13px] pr-[7px] ${first ? "" : "text-white/60"}">
                        <button aria-label="리본 옵션">${icon("ribbonopt", "size-[10px]")}</button>
                        <button aria-label="최소화">${icon("min", "size-[10px]")}</button>
                        <button aria-label="최대화">${icon("max", "size-[10px]")}</button>
                        <button aria-label="닫기">${icon("close", "size-[10px]")}</button>
                    </div>
                </div>
                <nav class="relative flex h-[15px] items-stretch">
                    ${tabs.map(([t, w]) => `<button class="${w} shrink-0 text-center ${t === active ? "bg-[#f3f3f3] text-[#217346]" : ""}">${t}</button>`).join("")}
                    <button class="ml-[7px] flex items-center gap-[4px]">${icon("bulb", "size-[10px]")}어떤 작업을 원하시나요?</button>
                    <button class="ml-auto mr-[7px]" aria-label="메모">${icon("comment", "size-[10px]")}</button>
                </nav>
            </div>`;
        }

        function formula(n) {
            return `<div class="flex h-[25px] gap-[2px] pt-[6px] pr-[3px] pb-[5px] pl-[2px] text-[8px] text-[#555]">
                <div class="grid w-[51px] items-center border border-[#d0d0d0] bg-white">
                    <input aria-label="이름 상자" value="${n === 1 ? "A1" : ""}" class="col-start-1 row-start-1 w-full pl-[3px] text-[7px] outline-none">
                    ${icon("caret", "col-start-1 row-start-1 mr-[2px] size-[6px] justify-self-end")}
                </div>
                <span class="w-[11px] text-center text-[#aaa] leading-[14px]">⋮</span>
                <div class="flex w-[54px] items-center justify-around border border-[#d0d0d0] bg-white">
                    <button class="text-[#b5b5b5]" aria-label="취소">${icon("close", "size-[10px]")}</button>
                    <button class="text-[#b5b5b5]" aria-label="입력">${icon("check", "size-[10px]")}</button>
                    <button aria-label="함수 삽입">${icon("fx", "size-[9px]")}</button>
                </div>
                <div class="flex flex-1 items-center border border-[#d0d0d0] bg-white pr-px">
                    <input aria-label="수식 입력줄" value="상가업소번호" class="flex-1 pl-[5px] outline-none">
                    ${icon("caret", "size-[6px]")}
                </div>
            </div>`;
        }

        function sheet(n) {
            const sel = n === 1;
            const right = ["L", "N", "P", "R"];
            const head = cols.map(([l, , w], i) =>
                `<th class="${w} border-r border-b border-r-[#c4c4c4] border-b-[#9a9a9a] py-0 text-[8px] font-normal ${l === "S" ? "pr-[3px] text-right" : "px-0"} ${sel && i === 0 ? "bg-[#d2d2d2] text-[#217346]" : "text-[#444]"}">${l}</th>`).join("");
            const names = cols.map(([l, t], i) =>
                `<td class="overflow-hidden border-r border-b border-[#707070] bg-[#e9e9e9] p-0 font-bold text-[#222] ${l === "S" ? "text-right" : "text-center"} ${sel && i === 0 ? "shadow-[inset_0_0_0_1px_#217346]" : ""}">${t}</td>`).join("");
            const body = rows.map((r, k) => `<tr class="h-[11px]">
                <th class="border-r border-b border-[#c4c4c4] p-0 text-center font-normal text-[#444]">${k + 2}</th>
                ${r.map((v, i) => `<td class="overflow-hidden border-r border-b border-[#707070] bg-white px-px py-0 text-[#222] ${/[가-힣]/.test(v) ? "" : "text-[6px]"} ${right.includes(cols[i][0]) ? "text-right" : ""}">${v}</td>`).join("")}
            </tr>`).join("");
            return `<div class="flex h-[216px] overflow-hidden">
                <div class="min-w-0 flex-1 overflow-hidden">
                    <table class="w-full table-fixed border-separate border-spacing-0 leading-[10px]">
                        <tr class="h-[11px]"><th class="w-[17px] border-r border-b border-[#c4c4c4] p-0"><span class="ml-auto mr-px block size-0 border-b-6 border-l-6 border-b-[#b5b5b5] border-l-transparent"></span></th>${head}</tr>
                        <tr class="h-[11px]"><th class="border-r border-b border-[#c4c4c4] p-0 text-center font-normal ${sel ? "bg-[#d2d2d2] text-[#217346]" : "text-[#444]"}">1</th>${names}</tr>
                        ${body}
                    </table>
                </div>
                <div class="flex w-[11px] flex-col items-center bg-[#e9e9e9] pt-[2px]">
                    <button class="flex size-[8px] items-center justify-center border border-[#bbb] bg-white text-[4px] text-black" aria-label="위로">▲</button>
                    <span class="mt-px h-[9px] w-2 border border-[#bbb] bg-white"></span>
                    <button class="mt-auto flex size-[8px] items-center justify-center border border-[#bbb] bg-white text-[4px] text-black" aria-label="아래로">▼</button>
                </div>
            </div>`;
        }

        function footer(n) {
            return `<div class="flex h-[14px] border-t border-[#b5b5b5]">
                <div class="flex w-[50px] items-center justify-center gap-[10px] text-[#b5b5b5]"><button aria-label="이전 시트">‹</button><button aria-label="다음 시트">›</button></div>
                <button class="mb-px w-[167px] border-b border-[#217346] bg-white text-[#217346]">${fileName}</button>
                <button class="ml-4" aria-label="새 시트">${icon("plus-c", "size-[10px]")}</button>
                <div class="ml-auto flex w-[512px] items-center pr-[10px]">
                    <span class="w-[10px] text-[#aaa]">⋮</span>
                    <button class="flex size-[9px] items-center justify-center border border-[#bbb] bg-white text-[4px] text-black" aria-label="왼쪽으로">◀</button>
                    <span class="h-[9px] border border-[#bbb] bg-white ${n === 1 ? "w-[243px]" : "w-[122px]"}"></span>
                    <button class="ml-auto flex size-[9px] items-center justify-center border border-[#bbb] bg-white text-[4px] text-black" aria-label="오른쪽으로">▶</button>
                </div>
            </div>
            <div class="flex h-[10px] items-center bg-[#f3f3f3] pl-[5px]">
                <span>준비</span>
                <button class="ml-2 flex items-center gap-px">${icon("access", "size-[9px]")}접근성: 조사 필요</button>
                <div class="ml-auto flex items-center pr-[9px] text-[#666]">
                    <button class="flex h-[10px] w-[19px] items-center justify-center bg-[#c8c8c8]" aria-label="기본">${icon("s-normal", "size-2")}</button>
                    <button class="flex w-5 items-center justify-center" aria-label="페이지 레이아웃">${icon("s-layout", "size-2")}</button>
                    <button class="flex w-5 items-center justify-center" aria-label="페이지 나누기">${icon("s-break", "size-2")}</button>
                    <button class="ml-1 w-[7px]" aria-label="축소">−</button>
                    <input type="range" aria-label="확대/축소" class="h-[7px] w-[50px] appearance-none bg-transparent [&::-webkit-slider-runnable-track]:h-px [&::-webkit-slider-runnable-track]:bg-[#888] [&::-webkit-slider-thumb]:-mt-[2px] [&::-webkit-slider-thumb]:h-[5px] [&::-webkit-slider-thumb]:w-[3px] [&::-webkit-slider-thumb]:appearance-none [&::-webkit-slider-thumb]:bg-[#444]">
                    <button class="w-[7px]" aria-label="확대">+</button>
                    <span class="ml-[5px] text-[6px]">100%</span>
                </div>
            </div>`;
        }

        [1, 2].forEach(n => {
            document.querySelector(`[data-titlebar="${n}"]`).innerHTML = titlebar(n);
            document.querySelector(`[data-formula="${n}"]`).innerHTML = formula(n);
            document.querySelector(`[data-sheet="${n}"]`).innerHTML = sheet(n);
            document.querySelector(`[data-footer="${n}"]`).innerHTML = footer(n);
        });
    </script>
</body>
</html>
